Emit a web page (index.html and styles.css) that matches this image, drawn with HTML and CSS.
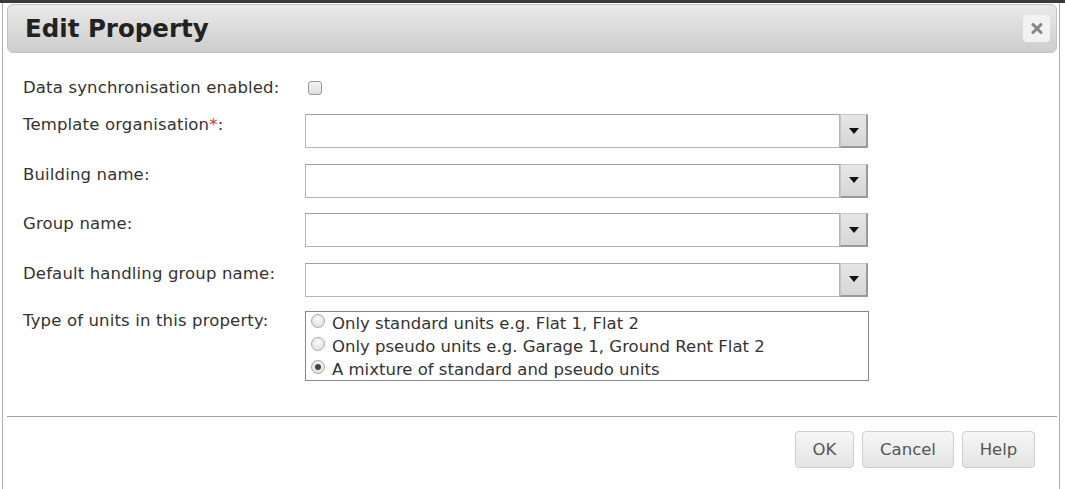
FILE: index.html
```html
<!DOCTYPE html>
<html>
<head>
<meta charset="utf-8">
<link rel="stylesheet" href="styles.css">
</head>
<body>
<div class="topstrip"></div>
<div class="dialog">
  <div class="titlebar">
    <span class="title">Edit Property</span>
    <span class="close"><svg width="12" height="11" viewBox="0 0 12 11"><path d="M2 1.5 L10 9.5 M10 1.5 L2 9.5" stroke="#858585" stroke-width="3" stroke-linecap="round"/></svg></span>
  </div>
  <div class="form">
    <div class="row row-check">
      <label class="lbl">Data synchronisation enabled:</label>
      <span class="checkbox"></span>
    </div>
    <div class="row">
      <label class="lbl">Template organisation<span class="req">*</span>:</label>
      <div class="combo"><span class="field"></span><span class="drop"><span class="tri"></span></span></div>
    </div>
    <div class="row">
      <label class="lbl">Building name:</label>
      <div class="combo"><span class="field"></span><span class="drop"><span class="tri"></span></span></div>
    </div>
    <div class="row">
      <label class="lbl">Group name:</label>
      <div class="combo"><span class="field"></span><span class="drop"><span class="tri"></span></span></div>
    </div>
    <div class="row row-last">
      <label class="lbl">Default handling group name:</label>
      <div class="combo"><span class="field"></span><span class="drop"><span class="tri"></span></span></div>
    </div>
    <div class="row row-radio">
      <label class="lbl lbl-radio">Type of units in this property:</label>
      <div class="radiobox">
        <div class="opt"><span class="radio"></span>Only standard units e.g. Flat 1, Flat 2</div>
        <div class="opt"><span class="radio"></span>Only pseudo units e.g. Garage 1, Ground Rent Flat 2</div>
        <div class="opt"><span class="radio on"></span>A mixture of standard and pseudo units</div>
      </div>
    </div>
  </div>
  <div class="sep"></div>
  <div class="buttons">
    <button class="btn btn-ok">OK</button>
    <button class="btn btn-cancel">Cancel</button>
    <button class="btn btn-help">Help</button>
  </div>
</div>
</body>
</html>
```

FILE: styles.css
```css
html, body {
  margin: 0;
  padding: 0;
  background: #ffffff;
  font-family: "DejaVu Sans", Verdana, sans-serif;
  color: #333333;
  overflow: hidden;
}
.topstrip {
  height: 3px;
  background: #3a3a3a;
}
.dialog {
  margin-left: 2px;
  width: 1058px;
  height: 486px;
  border-left: 1px solid #b0b0b0;
  border-right: 1px solid #b0b0b0;
  background: #ffffff;
  box-sizing: border-box;
  padding: 1px 2px 0 4px;
}
.titlebar {
  height: 49px;
  box-sizing: border-box;
  border: 1px solid #c4c4c4;
  border-radius: 6px;
  background: linear-gradient(#e9e9e9, #cdcdcd);
  display: flex;
  align-items: center;
  justify-content: space-between;
  padding: 0 6px 0 17px;
}
.title {
  font-weight: bold;
  font-size: 24.5px;
  color: #222222;
}
.close {
  width: 27px;
  height: 27px;
  border-radius: 4px;
  background: #f2f2f2;
  display: flex;
  align-items: center;
  justify-content: center;
}
.form {
  padding: 25px 0 0 16px;
}
.row {
  display: grid;
  grid-template-columns: 282px 564px;
  align-items: start;
  margin-bottom: 15.5px;
}
.row-check {
  margin-bottom: 16px;
  align-items: center;
  height: 20px;
}
.row-last { margin-bottom: 14px; }
.lbl {
  font-size: 16.5px;
  line-height: 20px;
  padding-top: 1px;
  white-space: nowrap;
  letter-spacing: 0.15px;
}
.row-check .lbl { padding-top: 0; }
.req { color: #e03030; }
.checkbox {
  display: block;
  width: 12px;
  height: 12px;
  margin-left: 3px;
  border: 1px solid #9a9a9a;
  border-radius: 3px;
  background: linear-gradient(#f4f4f4, #dedede);
}
.combo {
  display: flex;
  height: 34px;
}
.field {
  width: 535px;
  box-sizing: border-box;
  border: 1px solid #b5b5b5;
  border-top-color: #a0a0a0;
  background: #fff;
}
.drop {
  width: 28px;
  box-sizing: border-box;
  border: 1px solid #c6c6c6;
  border-right: 2px solid #9a9a9a;
  border-bottom: 2px solid #9a9a9a;
  background: linear-gradient(#e6e6e6, #d6d6d6);
  display: flex;
  align-items: center;
  justify-content: center;
}
.tri {
  width: 0;
  height: 0;
  border-left: 5px solid transparent;
  border-right: 5px solid transparent;
  border-top: 6px solid #111;
}
.row-radio { margin-bottom: 0; }
.lbl-radio { padding-top: 0; }
.radiobox {
  width: 564px;
  box-sizing: border-box;
  border: 1px solid #888888;
  padding: 0 0 0 5px;
  height: 70px;
}
.opt {
  font-size: 16.5px;
  line-height: 23px;
  height: 23px;
  display: flex;
  align-items: center;
  white-space: nowrap;
}
.radio {
  width: 12px;
  height: 12px;
  border-radius: 50%;
  border: 1px solid #aaaaaa;
  background: radial-gradient(circle at 50% 35%, #fbfbfb, #d8d8d8);
  margin-right: 7px;
  margin-top: -5px;
  box-sizing: content-box;
  position: relative;
  flex: none;
}
.radio.on::after {
  content: "";
  position: absolute;
  left: 3px;
  top: 3px;
  width: 6px;
  height: 6px;
  border-radius: 50%;
  background: #444;
}
.sep {
  margin-top: 35px;
  height: 1px;
  background: #a0a0a0;
}
.buttons {
  display: flex;
  justify-content: flex-end;
  gap: 8px;
  padding: 14px 22px 0 0;
}
.btn {
  height: 37px;
  font-family: "DejaVu Sans", Verdana, sans-serif;
  font-size: 16.5px;
  color: #555555;
  border: 1px solid #cfcfcf;
  border-radius: 4px;
  background: linear-gradient(#f6f6f6, #e4e4e4);
  padding: 0;
}
.btn-ok { width: 59px; }
.btn-cancel { width: 92px; }
.btn-help { width: 73px; }
```
